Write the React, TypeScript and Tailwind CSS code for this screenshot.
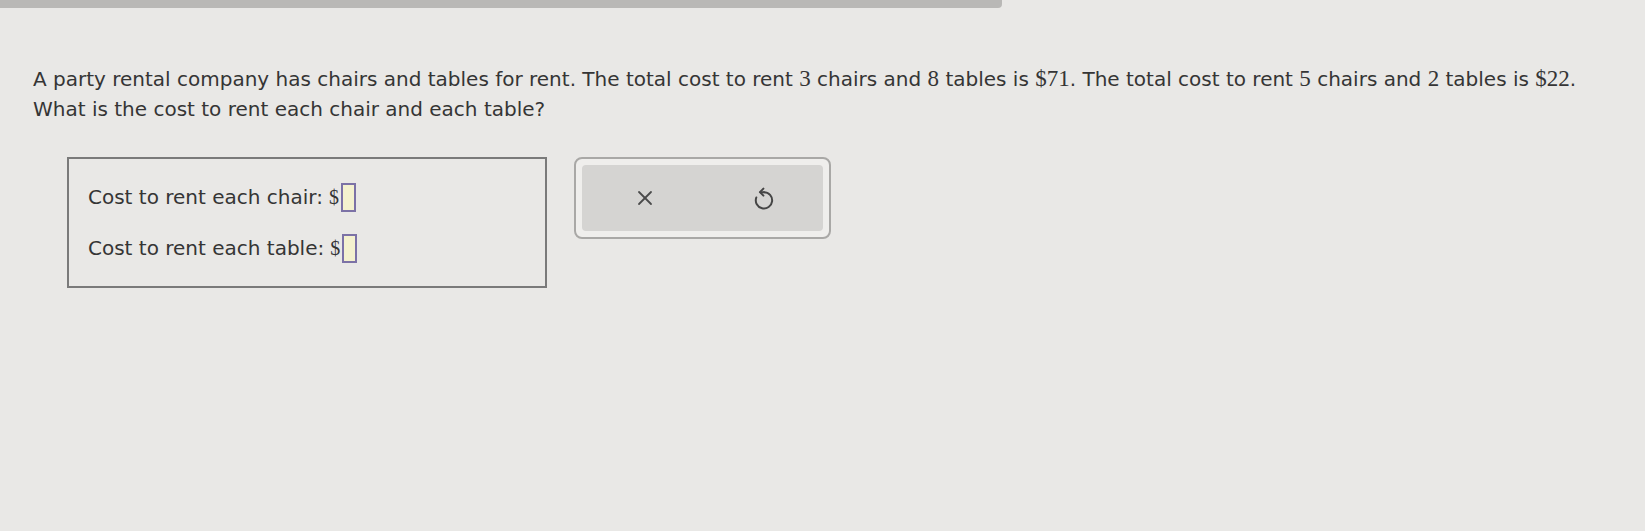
import { X } from 'lucide-react';

const sans = "font-['DejaVu_Sans',Verdana,sans-serif]";
const serif = "font-['Liberation_Serif','Times_New_Roman',serif]";

function M({ children }: { children: React.ReactNode }) {
    return <span className={`${serif} text-[23px]`}>{children}</span>;
}

function AnswerRow({ label }: { label: string }) {
    return (
        <div className="flex items-center">
            <span>{label}</span>
            <span className={`${serif} ml-[6px] text-[20px]`}>$</span>
            <span className="ml-[2px] h-[29px] w-[15px] border-2 border-[#7c72a6] bg-[#f4f1cf]" />
        </div>
    );
}

function StartOver() {
    return (
        <svg width="28" height="28" viewBox="0 0 24 24" fill="none" stroke="#454545" strokeWidth="1.7" strokeLinecap="round" strokeLinejoin="round">
            <path d="M12 7A7 7 0 1 1 5.4 11.6" />
            <path d="M12 7H9" />
            <path d="M11.5 4L8.5 7L11.5 10" />
        </svg>
    );
}

export default function App() {
    return (
        <main className={`min-h-[531px] w-full bg-[#e9e8e6] text-[#353535] ${sans}`}>
            <div className="h-[8px] w-[1002px] rounded-br-sm bg-[#b9b8b6]" />
            <div className="px-[33px] pt-[56px] text-[20px] leading-[30px]">
                <p>
                    A party rental company has chairs and tables for rent. The total cost to rent <M>3</M>{' '}
                    chairs and <M>8</M> tables is <M>$71</M>. The total cost to rent <M>5</M> chairs and{' '}
                    <M>2</M> tables is <M>$22</M>.
                </p>
                <p>What is the cost to rent each chair and each table?</p>
            </div>
            <div className="mt-[33px] flex items-start gap-[27px] pl-[67px]">
                <div className="flex h-[131px] w-[480px] flex-col gap-[21px] border-2 border-[#7a7a7a] pl-[19px] pt-[23px] text-[20px]">
                    <AnswerRow label="Cost to rent each chair:" />
                    <AnswerRow label="Cost to rent each table:" />
                </div>
                <div className="h-[82px] w-[257px] rounded-lg border-2 border-[#a9a8a6] bg-[#efeeec] p-[6px]">
                    <div className="flex h-full items-center justify-between rounded-sm bg-[#d5d4d2] pl-[51px] pr-[45px]">
                        <X size={24} strokeWidth={1.8} className="text-[#4a4a4a]" />
                        <StartOver />
                    </div>
                </div>
            </div>
        </main>
    );
}
